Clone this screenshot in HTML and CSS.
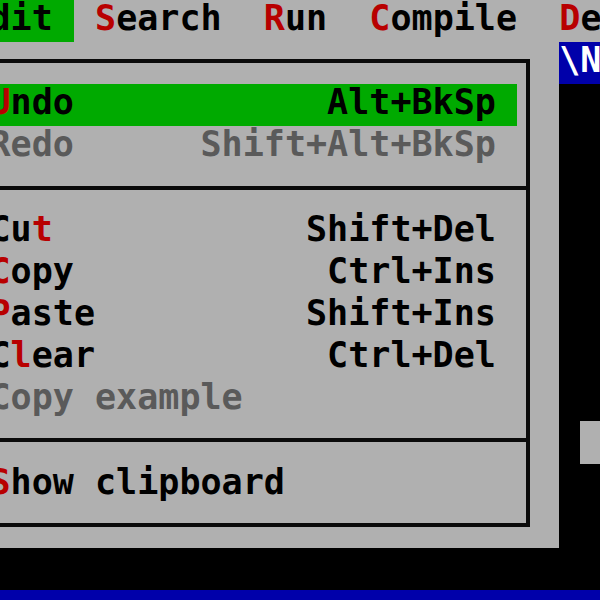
FILE: index.html
```html
<!DOCTYPE html>
<html>
<head>
<meta charset="utf-8">
<link rel="stylesheet" href="styles.css">
</head>
<body>
<div class="screen">
  <div class="menubar"><div class="bartext"><span class="cur"><span class="hot">E</span>dit </span> <span class="hot">S</span>earch  <span class="hot">R</span>un  <span class="hot">C</span>ompile  <span class="hot">D</span>ebug</div></div>
  <div class="middle">
    <div class="menu">
      <div class="frame">
        <div class="item cur"><span><span class="hot">U</span>ndo</span><span>Alt+BkSp</span></div>
        <div class="item off"><span>Redo</span><span>Shift+Alt+BkSp</span></div>
        <div class="sep"></div>
        <div class="item"><span>Cu<span class="hot">t</span></span><span>Shift+Del</span></div>
        <div class="item"><span><span class="hot">C</span>opy</span><span>Ctrl+Ins</span></div>
        <div class="item"><span><span class="hot">P</span>aste</span><span>Shift+Ins</span></div>
        <div class="item"><span>C<span class="hot">l</span>ear</span><span>Ctrl+Del</span></div>
        <div class="item off"><span>Copy example</span><span></span></div>
        <div class="sep"></div>
        <div class="item"><span><span class="hot">S</span>how clipboard</span><span></span></div>
      </div>
    </div>
    <div class="side">
      <div class="title">\N</div>
      <div class="editor"><div class="thumb"></div></div>
    </div>
  </div>
  <div class="shadow"></div>
  <div class="status"></div>
</div>
</body>
</html>
```
FILE: styles.css
```css
html, body {
  margin: 0;
  padding: 0;
  width: 600px;
  height: 600px;
  overflow: hidden;
  background: #000;
}

.screen {
  margin-left: -10.5px;
  width: 640px;
  font-family: "DejaVu Sans Mono", monospace;
  font-weight: bold;
  font-size: 35.05px;
  line-height: 36.8px;
  color: #000;
}

.menubar {
  height: 42.15px;
  background: #b0b0b0;
  overflow: hidden;
}

.bartext {
  margin-left: -21.1px;
  white-space: pre;
}

.menubar .cur {
  background: #00aa00;
  display: inline-block;
  height: 42.15px;
  vertical-align: top;
}

.hot {
  color: #b80000;
}

.middle {
  display: flex;
}

.menu {
  width: 569.7px;
  height: 505.8px;
  background: #b0b0b0;
  box-sizing: border-box;
  padding-top: 17px;
}

.frame {
  width: 540px;
  box-sizing: border-box;
  border-top: 4px solid #0a0a0a;
  border-right: 4px solid #0a0a0a;
  border-bottom: 4px solid #0a0a0a;
  padding: 21.15px 8.5px 17px 0;
}

.item {
  display: flex;
  justify-content: space-between;
  height: 42.15px;
  padding-right: 21.1px;
  white-space: pre;
}

.item.cur {
  background: #00aa00;
}

.item.off {
  color: #5a5a5a;
}

.sep {
  height: 42.15px;
  margin-right: -8.5px;
  box-sizing: border-box;
  padding-top: 17px;
}

.sep::after {
  content: "";
  display: block;
  height: 4px;
  background: #0a0a0a;
}

.side {
  width: 42.2px;
}

.title {
  height: 42.15px;
  background: #0000aa;
  color: #fff;
  white-space: pre;
  overflow: hidden;
}

.editor {
  height: 463.65px;
  background: #000;
  box-sizing: border-box;
  padding-top: 337.2px;
}

.thumb {
  margin-left: 21.1px;
  width: 21.1px;
  height: 42.15px;
  background: #b0b0b0;
}

.shadow {
  height: 42.15px;
  background: #000;
}

.status {
  height: 10px;
  background: #0000aa;
}
```
